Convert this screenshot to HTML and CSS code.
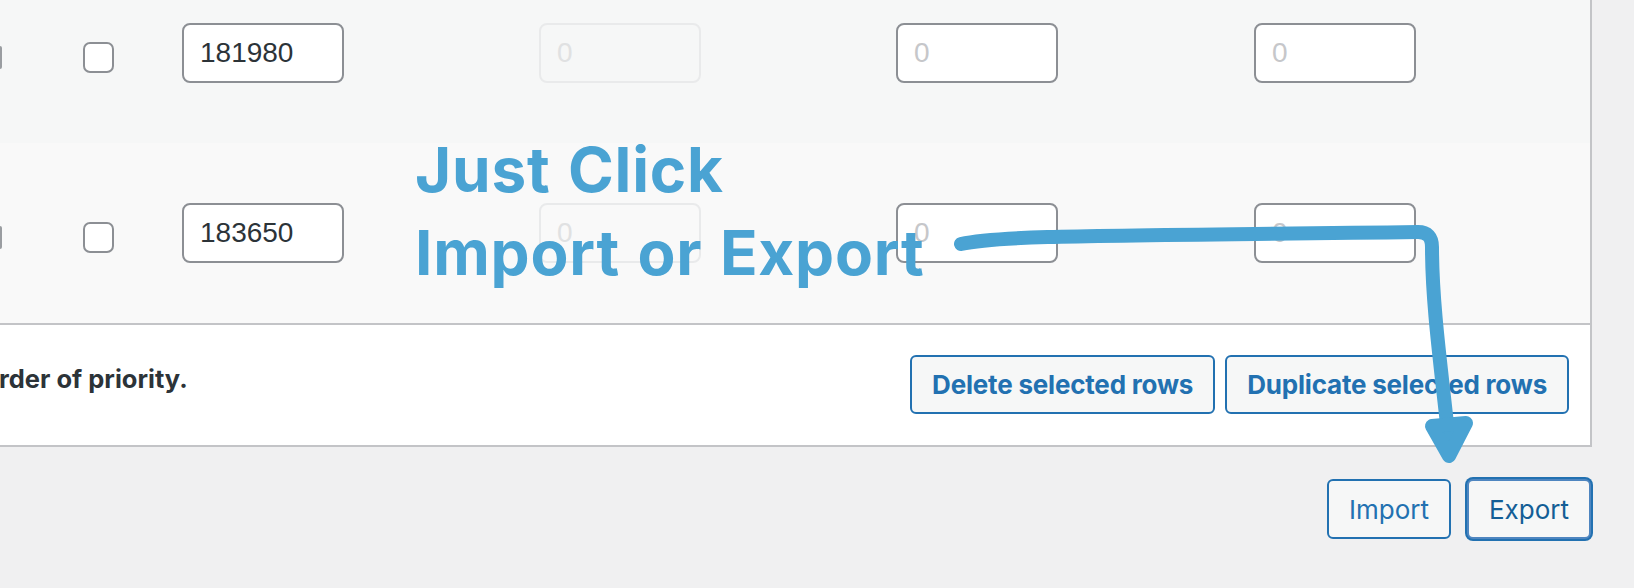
FILE: index.html
```html
<!DOCTYPE html>
<html lang="en">
<head>
<meta charset="utf-8">
<title>Rules table</title>
<link rel="stylesheet" href="styles.css">
</head>
<body>
<div class="page">
  <div class="panel">
    <div class="row row-odd">
      <div class="edge-cell"><span class="edge"></span></div>
      <input type="checkbox" class="cb">
      <input type="text" class="field" value="181980">
      <input type="text" class="field" placeholder="0" disabled>
      <input type="text" class="field" placeholder="0">
      <input type="text" class="field" placeholder="0">
    </div>
    <div class="row row-even">
      <div class="edge-cell"><span class="edge"></span></div>
      <input type="checkbox" class="cb">
      <input type="text" class="field" value="183650">
      <input type="text" class="field" placeholder="0" disabled>
      <input type="text" class="field" placeholder="0">
      <input type="text" class="field" placeholder="0">
    </div>
    <div class="panel-footer">
      <p class="note">rder of priority.</p>
      <div class="actions">
        <button class="btn btn-bold">Delete selected rows</button>
        <button class="btn btn-bold">Duplicate selected rows</button>
      </div>
    </div>
  </div>
  <div class="io-bar">
    <button class="btn btn-io">Import</button>
    <button class="btn btn-io btn-focus">Export</button>
  </div>

  <div class="annotation">Just Click<br>Import or Export</div>
  <svg class="arrow" viewBox="0 0 1634 588" width="1634" height="588" aria-hidden="true">
    <path d="M 961 244 C 1000 235, 1100 236, 1418 232 Q 1432 232 1432 247 C 1432 300 1440 360 1447 424" fill="none" stroke="#4aa3d3" stroke-width="14" stroke-linecap="round" stroke-linejoin="round"/>
    <path d="M 1432 426 L 1466 423 L 1449 456 Z" fill="#4aa3d3" stroke="#4aa3d3" stroke-width="14" stroke-linejoin="round"/>
  </svg>
</div>
</body>
</html>
```

FILE: styles.css
```css
* {
  box-sizing: border-box;
}

html, body {
  margin: 0;
  padding: 0;
  background: #f0f0f1;
  overflow: hidden;
}

body {
  font-family: Inter, "Liberation Sans", sans-serif;
  color: #2c3338;
}

.page {
  display: flow-root;
  position: relative;
  width: 1634px;
  height: 588px;
}

.panel {
  width: 1592px;
  margin-top: -37px;
  border-right: 2px solid #c3c4c7;
  border-bottom: 2px solid #c3c4c7;
  background: #fff;
}

.row {
  display: grid;
  grid-template-columns: 83px 99px 357px 357px 358px 162px;
  align-items: center;
  height: 180px;
}

.row-odd {
  background: #f6f7f7;
}

.row-even {
  background: #f9f9f9;
}

.edge-cell {
  display: flex;
  align-items: center;
  height: 100%;
}

.edge {
  display: block;
  width: 2px;
  height: 23px;
  margin-top: 8px;
  background: #9a9da1;
  border-radius: 0 2px 2px 0;
}

.cb {
  appearance: none;
  -webkit-appearance: none;
  width: 31px;
  height: 31px;
  margin: 9px 0 0 0;
  border: 2px solid #8c8f94;
  border-radius: 7px;
  background: #fff;
}

.field {
  width: 162px;
  height: 60px;
  margin: 0;
  padding: 0 16px;
  border: 2px solid #8c8f94;
  border-radius: 8px;
  background: #fff;
  font-family: "Liberation Sans", Arial, sans-serif;
  font-size: 28px;
  color: #2c3338;
  outline: none;
}

.field::placeholder {
  color: #c6c7ca;
}

.field:disabled {
  background: transparent;
  border-color: #e9eaeb;
}

.field:disabled::placeholder {
  color: #e0e1e2;
}

.panel-footer {
  display: flex;
  align-items: center;
  justify-content: space-between;
  height: 122px;
  padding: 0 21px 0 0;
  border-top: 2px solid #c3c4c7;
  background: #fff;
}

.note {
  margin: 0 0 14px -1px;
  font-family: Inter, "Liberation Sans", sans-serif;
  font-size: 25.5px;
  font-weight: 700;
  color: #2c3338;
}

.actions {
  display: flex;
  gap: 10px;
  margin-bottom: 2px;
}

.btn {
  height: 59px;
  margin: 0;
  padding: 0 20px;
  border: 2px solid #2271b1;
  border-radius: 6px;
  background: #f6f7f7;
  color: #2271b1;
  font-family: Inter, "Liberation Sans", sans-serif;
  font-size: 26px;
  white-space: nowrap;
}

.btn-bold {
  font-weight: 700;
  letter-spacing: -0.2px;
}

.io-bar {
  display: flex;
  justify-content: flex-end;
  gap: 16px;
  width: 1591px;
  margin-top: 32px;
}

.btn-io {
  height: 60px;
  font-weight: 400;
  font-size: 26px;
}

.btn-focus {
  color: #135e96;
  box-shadow: 0 0 0 2px #2271b1;
  border-color: #4f86c0;
}

.annotation {
  position: absolute;
  left: 415px;
  top: 128px;
  font-family: Inter, "Liberation Sans", sans-serif;
  font-size: 62px;
  font-weight: 700;
  line-height: 83px;
  letter-spacing: 0.8px;
  word-spacing: 2px;
  color: #4aa3d3;
  white-space: nowrap;
}

.arrow {
  position: absolute;
  left: 0;
  top: 0;
  pointer-events: none;
}
```
